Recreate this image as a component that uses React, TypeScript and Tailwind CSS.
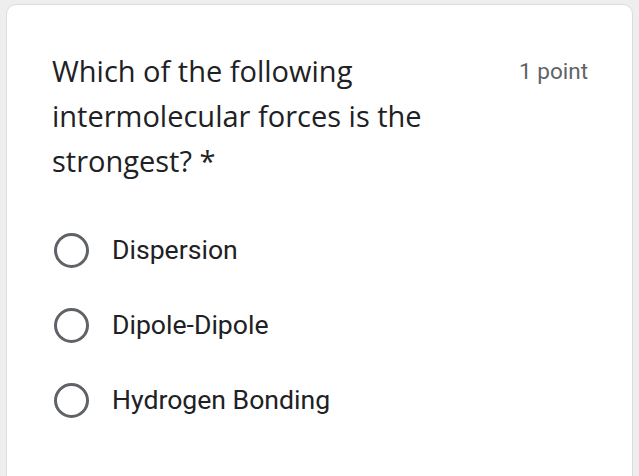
import React from "react";

const options = ["Dispersion", "Dipole-Dipole", "Hydrogen Bonding"];

export default function App() {
  return (
    <div className="w-[639px] h-[476px] overflow-hidden bg-[#eeeeee] pt-[4px] pl-[6px]">
      <div className="w-[627px] h-[520px] bg-white border border-[#dadce0] rounded-[10px] pt-[43px] pl-[45px] pr-[44px]">
        <div className="flex justify-between items-start">
          <div
            className="w-[400px] text-[29px] leading-[45px] text-[#202124]"
            style={{ fontFamily: '"Open Sans", sans-serif' }}
          >
            Which of the following intermolecular forces is the strongest? *
          </div>
          <div
            className="text-[22.5px] leading-[45px] text-[#5f6368] pt-[1px]"
            style={{ fontFamily: 'Roboto, sans-serif' }}
          >
            1 point
          </div>
        </div>
        <div className="mt-[50px] flex flex-col gap-[41px]">
          {options.map((o) => (
            <div key={o} className="flex items-center h-[34px]">
              <div className="w-[35px] h-[35px] rounded-full border-[3px] border-[#5f6368] ml-[2px] shrink-0" />
              <div
                className="ml-[23px] text-[26.6px] text-[#202124]"
                style={{ fontFamily: 'Roboto, sans-serif' }}
              >
                {o}
              </div>
            </div>
          ))}
        </div>
      </div>
    </div>
  );
}
